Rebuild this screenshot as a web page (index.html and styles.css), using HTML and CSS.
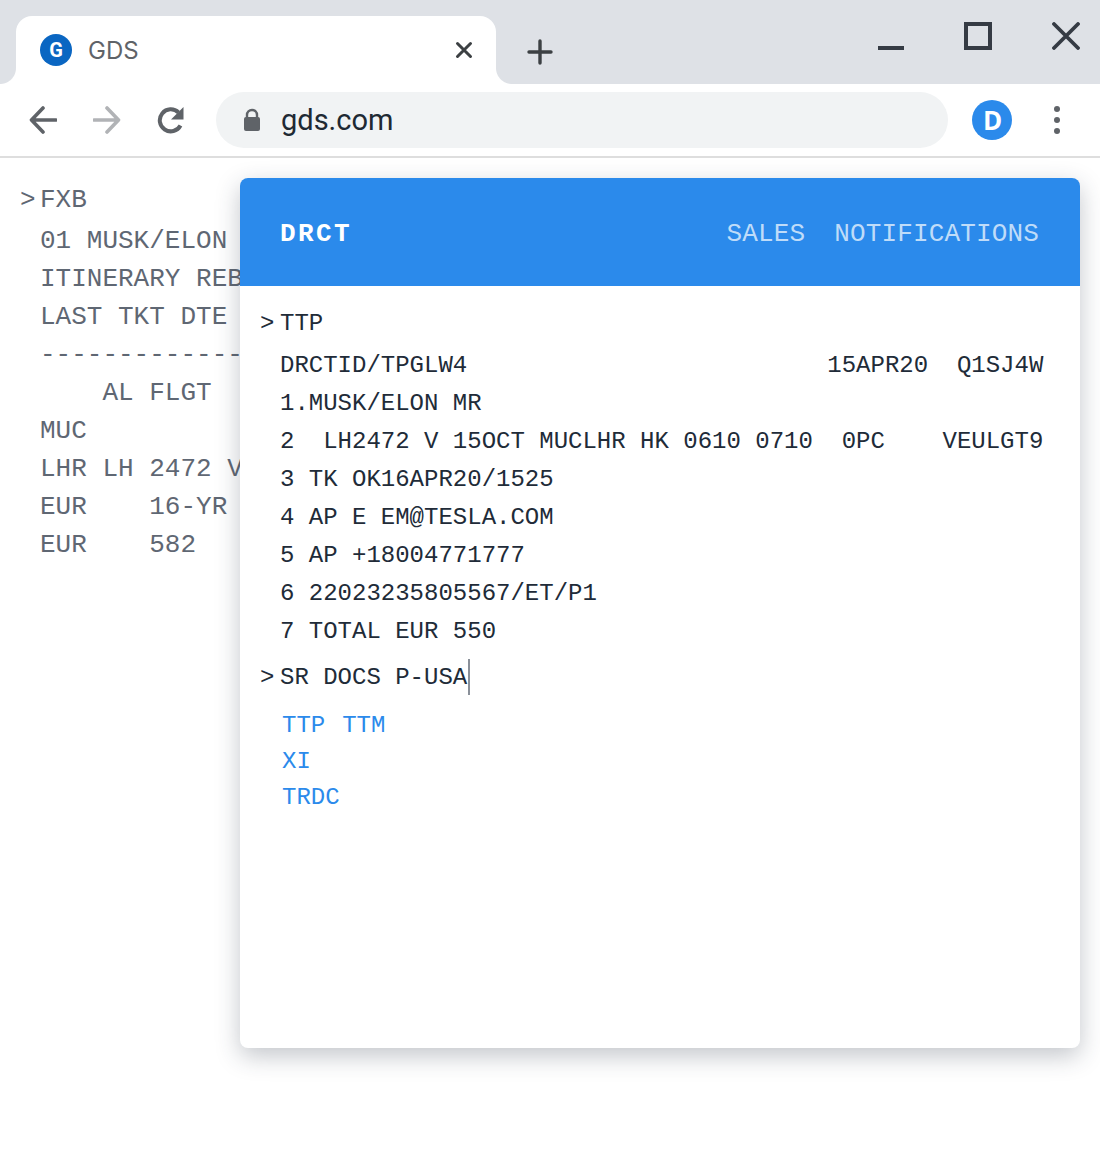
FILE: index.html
```html
<!DOCTYPE html>
<html lang="en">
<head>
<meta charset="utf-8">
<title>GDS</title>
<link rel="stylesheet" href="styles.css">
</head>
<body>
<div class="window">
  <header class="tabstrip">
    <div class="tab">
      <span class="favicon">G</span>
      <span class="tab-title">GDS</span>
      <svg class="tab-close" width="20" height="20" viewBox="0 0 20 20"><path d="M3.500 3.500l13 13M16.500 3.500l-13 13" fill="none" stroke="#3c4043" stroke-width="3" stroke-linecap="round"/></svg>
    </div>
    <svg class="new-tab" width="26" height="26" viewBox="0 0 26 26"><path d="M13 2v22M2 13h22" fill="none" stroke="#3c4043" stroke-width="3.400" stroke-linecap="round"/></svg>
    <div class="window-controls">
      <svg width="28" height="6" viewBox="0 0 28 6"><rect x="0" y="0" width="26" height="4" fill="#353b44"/></svg>
      <svg width="28" height="28" viewBox="0 0 28 28"><rect x="2" y="2" width="24" height="24" fill="none" stroke="#353b44" stroke-width="4"/></svg>
      <svg width="28" height="28" viewBox="0 0 28 28"><path d="M2 2l24 24M26 2L2 26" fill="none" stroke="#353b44" stroke-width="3.800" stroke-linecap="round"/></svg>
    </div>
  </header>
  <nav class="toolbar">
    <div class="nav-buttons">
      <svg width="28" height="28" viewBox="0 0 28 28"><path d="M27 14H3M14 2L2.500 14 14 26" fill="none" stroke="#5f6368" stroke-width="3.600" stroke-linecap="round" stroke-linejoin="round"/></svg>
      <svg width="28" height="28" viewBox="0 0 28 28"><path d="M1 14h24M14 2l11.500 12L14 26" fill="none" stroke="#b1b3b6" stroke-width="3.600" stroke-linecap="round" stroke-linejoin="round"/></svg>
      <svg width="28" height="28" viewBox="0 0 28 28"><path d="M23.500 19.500A11 11 0 1 1 21.500 6.500" fill="none" stroke="#5f6368" stroke-width="4"/><path d="M26.500 1v12.500H14z" fill="#5f6368"/></svg>
    </div>
    <div class="omnibox">
      <svg width="18" height="24" viewBox="0 0 18 24"><path d="M4 10V7a5 5 0 0 1 10 0v3" fill="none" stroke="#5f6368" stroke-width="2.400"/><rect x="1" y="9" width="16" height="14" rx="2" fill="#5f6368"/></svg>
      <span class="url">gds.com</span>
    </div>
    <span class="avatar">D</span>
    <svg class="menu" width="8" height="32" viewBox="0 0 8 32"><circle cx="4" cy="5" r="3" fill="#5f6368"/><circle cx="4" cy="16" r="3" fill="#5f6368"/><circle cx="4" cy="27" r="3" fill="#5f6368"/></svg>
  </nav>
  <main class="page">
    <section class="terminal">
      <div class="prompt"><span class="caret">&gt;</span><span>FXB</span></div>
      <pre class="output">01 MUSK/ELON
ITINERARY REB
LAST TKT DTE
-------------
    AL FLGT
MUC
LHR LH 2472 V
EUR    16-YR
EUR    582</pre>
    </section>
    <section class="panel">
      <header class="panel-head">
        <span class="brand">DRCT</span>
        <div class="panel-links"><span>SALES</span><span>NOTIFICATIONS</span></div>
      </header>
      <div class="panel-body">
        <div class="prompt"><span class="caret">&gt;</span><span>TTP</span></div>
        <pre class="output">DRCTID/TPGLW4                         15APR20  Q1SJ4W
1.MUSK/ELON MR
2  LH2472 V 15OCT MUCLHR HK 0610 0710  0PC    VEULGT9
3 TK OK16APR20/1525
4 AP E EM@TESLA.COM
5 AP +18004771777
6 22023235805567/ET/P1
7 TOTAL EUR 550</pre>
        <div class="prompt prompt-input"><span class="caret">&gt;</span><span class="input">SR DOCS P-USA</span></div>
        <ul class="suggestions">
          <li>TTP TTM</li>
          <li>XI</li>
          <li>TRDC</li>
        </ul>
      </div>
    </section>
  </main>
</div>
</body>
</html>
```
FILE: styles.css
```css
* { box-sizing: border-box; }
html, body { margin: 0; padding: 0; background: #fff; }
.window { width: 1100px; height: 1160px; overflow: hidden; display: flex; flex-direction: column; position: relative; }

.tabstrip { height: 84px; flex: none; background: #dee1e6; display: flex; align-items: flex-end; padding-left: 16px; }
.tab { position: relative; width: 480px; height: 68px; background: #fff; border-radius: 16px 16px 0 0; display: flex; align-items: center; padding: 0 22px 0 24px; }
.tab::before, .tab::after { content: ""; position: absolute; bottom: 0; width: 16px; height: 16px; }
.tab::before { left: -16px; background: radial-gradient(circle at 0 0, #dee1e6 15.5px, #fff 16.5px); }
.tab::after { right: -16px; background: radial-gradient(circle at 100% 0, #dee1e6 15.5px, #fff 16.5px); }
.favicon { width: 32px; height: 32px; border-radius: 50%; background: #0a66c2; color: #fff; font: 700 20px/32px "Roboto", sans-serif; text-align: center; }
.tab-title { flex: 1; margin-left: 16px; font: 400 24px "Inter", "Roboto", sans-serif; color: #5f6368; }
.new-tab { margin: 0 0 19px 31px; }
.window-controls { margin-left: auto; width: 222px; height: 84px; display: flex; gap: 58px; align-items: flex-start; padding: 22px 20px 0 0; flex: none; }
.window-controls svg:first-child { margin-top: 24px; }
.window-controls svg:last-child { margin-left: 2px; }

.toolbar { height: 74px; flex: none; border-bottom: 2px solid #dedede; display: flex; align-items: center; padding: 0 0 0 29px; background: #fff; }
.nav-buttons { display: flex; gap: 36px; width: 187px; flex: none; }
.omnibox { width: 732px; height: 56px; border-radius: 28px; background: #f1f3f4; display: flex; align-items: center; padding-left: 27px; flex: none; }
.url { margin-left: 20px; font: 400 29px "Roboto", sans-serif; color: #202933; }
.avatar { margin-left: 24px; width: 40px; height: 40px; border-radius: 50%; background: #2b8aeb; color: #fff; font: 700 26px/40px "Open Sans", sans-serif; text-align: center; flex: none; padding-left: 1px; }
.menu { margin-left: 41px; }

.page { flex: 1; position: relative; font-family: "Liberation Mono", monospace; }
.terminal { width: 240px; padding: 23px 0 0 20px; font-size: 26px; line-height: 38px; color: #5f6773; }
.prompt { display: flex; height: 38px; line-height: 38px; }
.caret { width: 20px; flex: none; }
.output { margin: 3px 0 0 20px; font: inherit; line-height: 38px; }

.panel { position: absolute; left: 240px; top: 20px; width: 840px; height: 870px; background: #fff; border-radius: 8px; overflow: hidden; box-shadow: 0 8px 24px rgba(40, 50, 70, .28); color: #212b38; }
.panel-head { height: 108px; background: #2b8aeb; display: flex; align-items: center; justify-content: space-between; padding: 4px 41px 0 41px; font-size: 26px; line-height: 36px; }
.brand { font-weight: 700; color: #fff; letter-spacing: 2.400px; margin-left: -1px; }
.panel-links { display: flex; gap: 29px; color: #bfdcf9; letter-spacing: .15px; }
.panel-body { padding: 19px 20px 0 20px; font-size: 24px; line-height: 38px; }
.panel-body .output { margin-top: 4px; }
.prompt-input { margin-top: 8px; }
.input { border-right: 2px solid #8a9099; height: 36px; line-height: 38px; padding-right: 1px; }
.suggestions { list-style: none; margin: 11px 0 0 22px; padding: 0; line-height: 36px; color: #2b8aeb; word-spacing: 2.600px; }
```
